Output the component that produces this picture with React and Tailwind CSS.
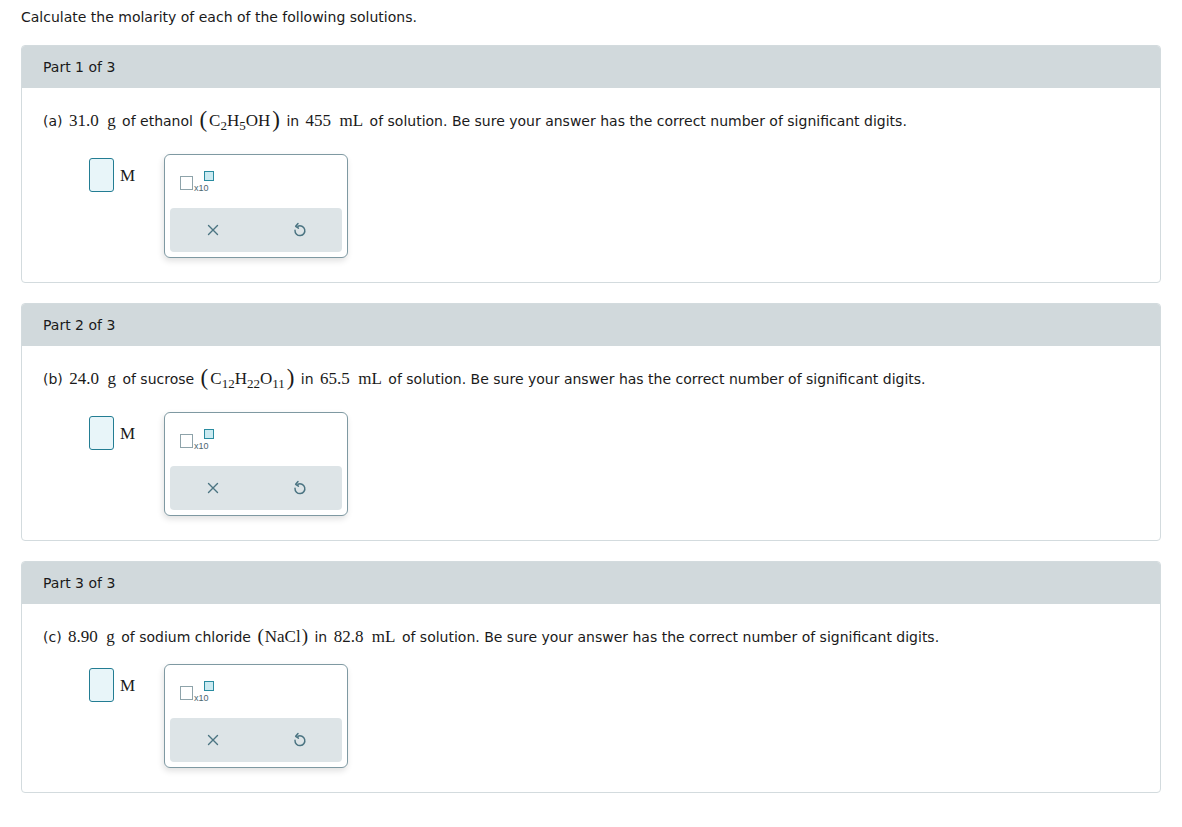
const parts = [
  {
    label: "Part 1 of 3",
    tall: true,
    question: (
      <>
        (a) <M>31.0</M> <M>g</M> of ethanol{" "}
        <Paren>
          C<Sub>2</Sub>H<Sub>5</Sub>OH
        </Paren>{" "}
        in <M>455</M> <M>mL</M> of solution. Be sure your answer has the correct number of significant digits.
      </>
    ),
  },
  {
    label: "Part 2 of 3",
    tall: true,
    question: (
      <>
        (b) <M>24.0</M> <M>g</M> of sucrose{" "}
        <Paren>
          C<Sub>12</Sub>H<Sub>22</Sub>O<Sub>11</Sub>
        </Paren>{" "}
        in <M>65.5</M> <M>mL</M> of solution. Be sure your answer has the correct number of significant digits.
      </>
    ),
  },
  {
    label: "Part 3 of 3",
    tall: false,
    question: (
      <>
        (c) <M>8.90</M> <M>g</M> of sodium chloride <Paren small>NaCl</Paren> in <M>82.8</M> <M>mL</M> of
        solution. Be sure your answer has the correct number of significant digits.
      </>
    ),
  },
];

function M({ children }) {
  return <span className="mx-[2px] font-['Liberation_Serif',serif] text-[17px]">{children}</span>;
}

function Sub({ children }) {
  return <span className="text-[13px] relative top-[4px]">{children}</span>;
}

function Paren({ children, small }) {
  return (
    <span className="mx-[2px] font-['Liberation_Serif',serif] text-[17px] whitespace-nowrap">
      <span className={small ? "text-[19px] mr-[1px]" : "text-[23px] relative top-[1px] mr-[2px]"}>(</span>
      {children}
      <span className={small ? "text-[19px] ml-[1px]" : "text-[23px] relative top-[1px] ml-[2px]"}>)</span>
    </span>
  );
}

function UndoIcon() {
  return (
    <svg width="15" height="16" viewBox="0 0 14 15" fill="none" stroke="#4b7482" strokeWidth="1.4" strokeLinecap="round" strokeLinejoin="round">
      <path d="M5.4 4 A4.6 4.6 0 1 1 2.8 7.8" />
      <path d="M5.6 1.4 L3.4 4 L6 5.8" />
    </svg>
  );
}

function XIcon() {
  return (
    <svg width="12" height="12" viewBox="0 0 12 12" stroke="#4b7482" strokeWidth="1.4" strokeLinecap="round">
      <path d="M1.5 1.5 L10.5 10.5 M10.5 1.5 L1.5 10.5" />
    </svg>
  );
}

function Toolbox() {
  return (
    <div className="w-[184px] h-[104px] border border-[#7f99a2] rounded-[6px] bg-white shadow-[-1px_3px_6px_rgba(0,0,0,0.12)] flex flex-col p-[5px]">
      <div className="relative flex-1">
        <div className="absolute left-[10px] top-[16px] w-[13px] h-[14px] border-[1.5px] border-[#8ea3aa] bg-white" />
        <span className="absolute left-[24px] top-[24px] text-[9px] leading-none text-[#4b6570] font-['Liberation_Sans',sans-serif]">x10</span>
        <div className="absolute left-[34px] top-[11px] w-[10px] h-[10px] border-[1.5px] border-[#2a8ca0] bg-[#cbeaf1]" />
      </div>
      <div className="h-[44px] bg-[#dde4e7] rounded-[4px] flex">
        <button className="flex-1 flex items-center justify-center">
          <XIcon />
        </button>
        <button className="flex-1 flex items-center justify-center">
          <UndoIcon />
        </button>
      </div>
    </div>
  );
}

function Part({ label, question, tall }) {
  return (
    <div className="border border-[#d3dbde] rounded-[4px] overflow-hidden">
      <div className="h-[42px] bg-[#d1d9dc] px-[21px] flex items-center">{label}</div>
      <div className="pl-[21px] pt-[20px] pb-[24px]">
        <div className="h-[24px] flex items-center whitespace-pre-wrap">
          <p>{question}</p>
        </div>
        <div className={`flex items-start ${tall ? "mt-[22px]" : "mt-[16px]"}`}>
          <div className="ml-[46px] w-[75px] flex items-start pt-[4px]">
            <div className="w-[25px] h-[34px] border border-[#237d93] rounded-[3px] bg-[#e8f5f9]" />
            <span className="ml-[6px] mt-[9px] font-['Liberation_Serif',serif] text-[17px] leading-none">M</span>
          </div>
          <Toolbox />
        </div>
      </div>
    </div>
  );
}

export default function App() {
  return (
    <div className="min-h-screen bg-white px-[21px] pt-[9px] font-['DejaVu_Sans',Verdana,sans-serif] text-[14px] leading-[16px] text-[#1a1a1a]">
      <p>Calculate the molarity of each of the following solutions.</p>
      <div className="mt-[20px] flex flex-col gap-[20px]">
        {parts.map((p) => (
          <Part key={p.label} label={p.label} question={p.question} tall={p.tall} />
        ))}
      </div>
    </div>
  );
}
